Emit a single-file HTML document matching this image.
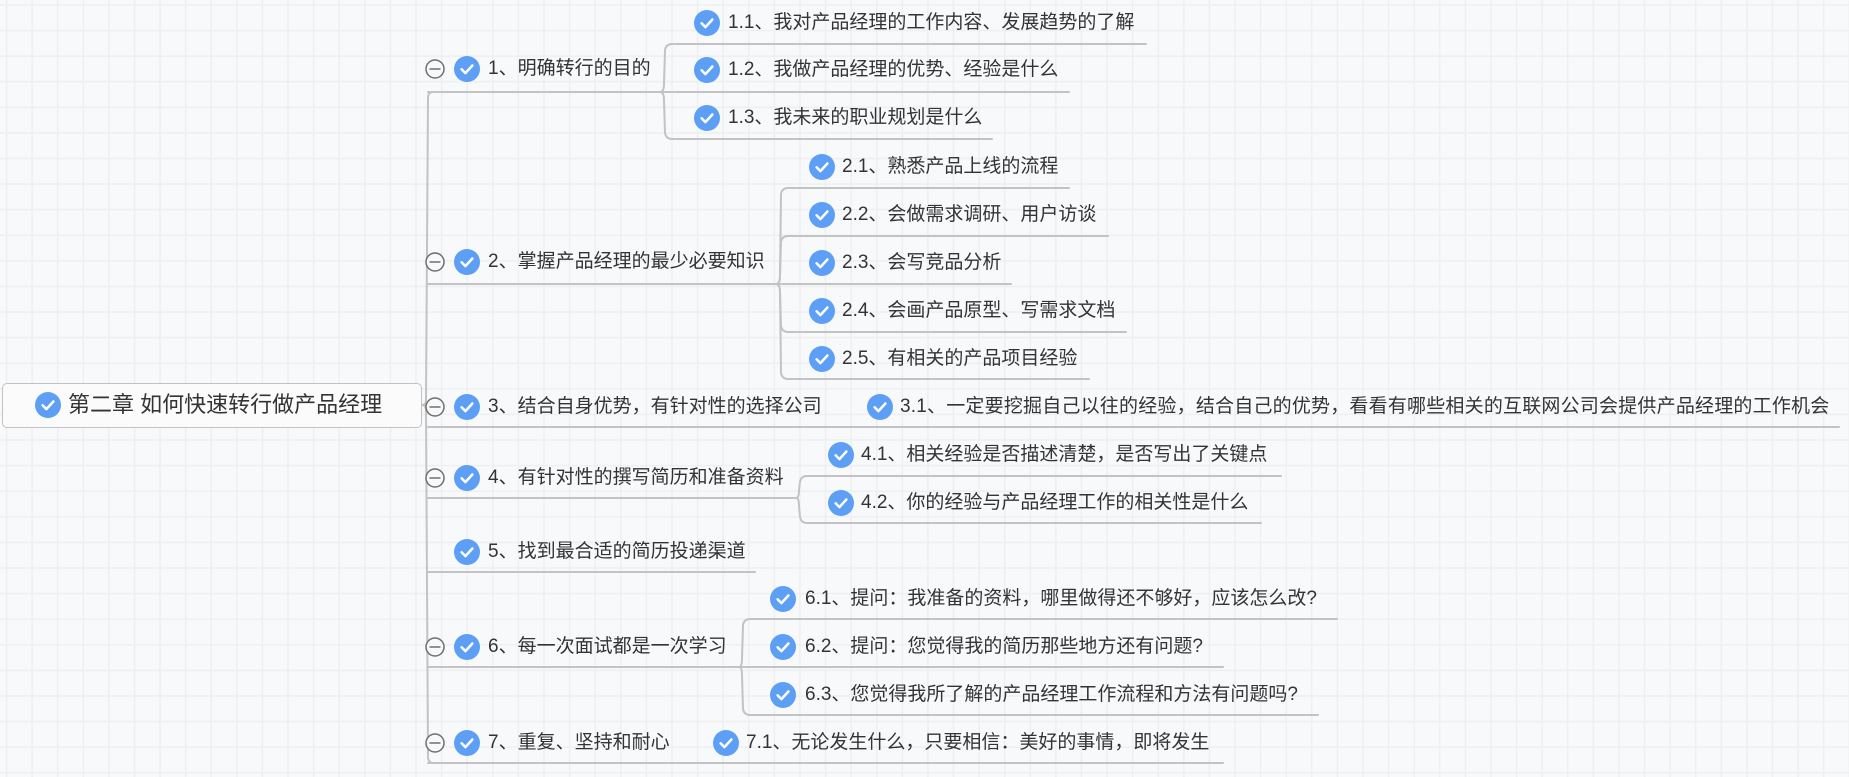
<!DOCTYPE html>
<html><head><meta charset="utf-8">
<style>
html,body{margin:0;padding:0}
body{width:1849px;height:777px;overflow:hidden;position:relative;
background-color:#f8f9fb;
background-image:linear-gradient(to right,#eeeff1 0,#eeeff1 1.6px,transparent 1.6px),linear-gradient(to bottom,#eeeff1 0,#eeeff1 1.6px,transparent 1.6px);
background-size:25.6px 25.6px;background-position:5.8px 4.2px;
font-family:"Liberation Sans","Noto Sans CJK SC",sans-serif;color:#333}
.t{position:absolute;font-size:19px;line-height:24px;white-space:nowrap;color:#333}
.root{position:absolute;left:2px;top:383px;width:420px;height:45px;border:1.5px solid #c2c2c2;border-radius:5px;background:#fbfbfc;box-sizing:border-box}
.rt{position:absolute;left:68px;top:391px;font-size:22px;line-height:28px;white-space:nowrap;color:#333}
svg{position:absolute;left:0;top:0}
</style></head><body>
<div class="root"></div>
<div class="rt">第二章 如何快速转行做产品经理</div>
<svg width="1849" height="777" viewBox="0 0 1849 777">
<g fill="none" stroke="#c3c3c3" stroke-width="2" stroke-linecap="round">
<path d="M436 92 H433 Q428 92 428 98 L426 400 Q426 405 422 405"/>
<path d="M422 405 Q426 405 426 410 L428 757 Q428 763 434 763"/>
<path d="M428 92 H660"/>
<path d="M428 284 H776"/>
<path d="M428 427 H1839"/>
<path d="M428 498 H796"/>
<path d="M428 572 H755"/>
<path d="M428 667 H739"/>
<path d="M428 763 H1223"/>
<path d="M660 92 Q664 92 664 84 L665 50 Q666 44 672 44 H1146"/>
<path d="M660 92 Q664 92 664 100 L665 133 Q666 139 672 139 H992"/>
<path d="M660 92 H1069"/>
<path d="M776 284 Q780 284 780 276 L781 194 Q782 188 788 188 H1069"/>
<path d="M776 284 Q780 284 780 276 L781 242 Q782 236 788 236 H1108"/>
<path d="M776 284 H1011"/>
<path d="M776 284 Q780 284 780 292 L781 326 Q782 332 788 332 H1126"/>
<path d="M776 284 Q780 284 780 292 L781 373 Q782 379 788 379 H1089"/>
<path d="M796 498 Q799 498 799 490 L800 482 Q801 476 807 476 H1281"/>
<path d="M796 498 Q799 498 799 506 L800 517 Q801 523 807 523 H1261"/>
<path d="M739 667 Q742 667 742 659 L743 625 Q744 619 750 619 H1337"/>
<path d="M739 667 H1223"/>
<path d="M739 667 Q742 667 742 675 L743 709 Q744 715 750 715 H1318"/>
</g>
<defs>
<g id="ck"><circle r="13" fill="#5d9ff5"/><polyline points="-5.4,0.3 -1.6,4.1 5.4,-3.5" fill="none" stroke="#fff" stroke-width="2.5" stroke-linecap="round" stroke-linejoin="round"/></g>
<g id="mn"><circle r="9" fill="#f8f9fb" stroke="#6f6f6f" stroke-width="1.5"/><line x1="-5.5" y1="0" x2="5.5" y2="0" stroke="#6f6f6f" stroke-width="1.5"/></g>
</defs>
<use href="#ck" x="48" y="405"/>
<use href="#mn" x="435" y="69"/><use href="#ck" x="467" y="69"/>
<use href="#mn" x="435" y="262"/><use href="#ck" x="467" y="262"/>
<use href="#mn" x="435" y="407"/><use href="#ck" x="467" y="407"/>
<use href="#mn" x="435" y="478"/><use href="#ck" x="467" y="478"/>
<use href="#ck" x="467" y="552"/>
<use href="#mn" x="435" y="647"/><use href="#ck" x="467" y="647"/>
<use href="#mn" x="435" y="743"/><use href="#ck" x="467" y="743"/>
<use href="#ck" x="707" y="23"/><use href="#ck" x="707" y="70"/><use href="#ck" x="707" y="118"/>
<use href="#ck" x="822" y="167"/><use href="#ck" x="822" y="215"/><use href="#ck" x="822" y="263"/><use href="#ck" x="822" y="311"/><use href="#ck" x="822" y="359"/>
<use href="#ck" x="880" y="407"/>
<use href="#ck" x="841" y="455"/><use href="#ck" x="841" y="503"/>
<use href="#ck" x="783" y="599"/><use href="#ck" x="783" y="647"/><use href="#ck" x="783" y="695"/>
<use href="#ck" x="726" y="743"/>
</svg>
<div class="t" style="left:488px;top:57px">1、明确转行的目的</div>
<div class="t" style="left:488px;top:250px">2、掌握产品经理的最少必要知识</div>
<div class="t" style="left:488px;top:395px">3、结合自身优势，有针对性的选择公司</div>
<div class="t" style="left:488px;top:466px">4、有针对性的撰写简历和准备资料</div>
<div class="t" style="left:488px;top:540px">5、找到最合适的简历投递渠道</div>
<div class="t" style="left:488px;top:635px">6、每一次面试都是一次学习</div>
<div class="t" style="left:488px;top:731px">7、重复、坚持和耐心</div>
<div class="t" style="left:728px;top:11px">1.1、我对产品经理的工作内容、发展趋势的了解</div>
<div class="t" style="left:728px;top:58px">1.2、我做产品经理的优势、经验是什么</div>
<div class="t" style="left:728px;top:106px">1.3、我未来的职业规划是什么</div>
<div class="t" style="left:842px;top:155px">2.1、熟悉产品上线的流程</div>
<div class="t" style="left:842px;top:203px">2.2、会做需求调研、用户访谈</div>
<div class="t" style="left:842px;top:251px">2.3、会写竞品分析</div>
<div class="t" style="left:842px;top:299px">2.4、会画产品原型、写需求文档</div>
<div class="t" style="left:842px;top:347px">2.5、有相关的产品项目经验</div>
<div class="t" style="left:900px;top:395px;letter-spacing:0.2px">3.1、一定要挖掘自己以往的经验，结合自己的优势，看看有哪些相关的互联网公司会提供产品经理的工作机会</div>
<div class="t" style="left:861px;top:443px">4.1、相关经验是否描述清楚，是否写出了关键点</div>
<div class="t" style="left:861px;top:491px">4.2、你的经验与产品经理工作的相关性是什么</div>
<div class="t" style="left:805px;top:587px">6.1、提问：我准备的资料，哪里做得还不够好，应该怎么改?</div>
<div class="t" style="left:805px;top:635px">6.2、提问：您觉得我的简历那些地方还有问题?</div>
<div class="t" style="left:805px;top:683px">6.3、您觉得我所了解的产品经理工作流程和方法有问题吗?</div>
<div class="t" style="left:746px;top:731px">7.1、无论发生什么，只要相信：美好的事情，即将发生</div>
</body></html>
